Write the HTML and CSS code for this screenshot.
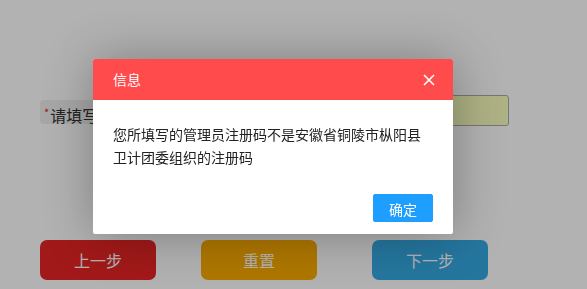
FILE: index.html
```html
<!DOCTYPE html>
<html lang="zh-CN">
<head>
<meta charset="utf-8">
<title>信息</title>
<link rel="stylesheet" href="styles.css">
</head>
<body>
<div class="page">
  <div class="form-row">
    <label class="field-label"><span class="req">*</span>请填写管理员注册码</label>
    <input class="field-input" type="text" value="">
  </div>
  <div class="actions">
    <button class="btn btn-prev">上一步</button>
    <button class="btn btn-reset">重置</button>
    <button class="btn btn-next">下一步</button>
  </div>
</div>
<div class="shade"></div>
<div class="layer">
  <div class="layer-title">信息
    <span class="layer-close"><svg width="12" height="12" viewBox="0 0 12 12"><path d="M1 1L11 11M11 1L1 11" stroke="#fff" stroke-width="1.6" fill="none"/></svg></span>
  </div>
  <div class="layer-content">您所填写的管理员注册码不是安徽省铜陵市枞阳县卫计团委组织的注册码</div>
  <div class="layer-btns"><a class="layer-btn">确定</a></div>
</div>
</body>
</html>
```
FILE: styles.css
```css
html, body {
  margin: 0;
  padding: 0;
  background: #fff;
  font-family: "Noto Sans CJK SC", "Noto Sans", sans-serif;
  overflow: hidden;
  width: 587px;
  height: 289px;
}
.page {
  padding: 95px 0 0 40px;
}
.form-row {
  display: flex;
  align-items: flex-start;
  height: 31px;
}
.field-label {
  display: block;
  flex: none;
  margin-top: 5px;
  height: 24px;
  line-height: 24px;
  width: 154px;
  box-sizing: border-box;
  padding-left: 4px;
  background: #f0f0f0;
  border-radius: 4px;
  font-size: 16px;
  color: #333;
  white-space: nowrap;
}
.req {
  color: #e02020;
  font-size: 11px;
  vertical-align: 5px;
  margin-right: 1px;
}
.field-input {
  flex: none;
  margin-left: 20px;
  width: 295px;
  height: 31px;
  box-sizing: border-box;
  background: #faffbd;
  border: 1px solid #aaa;
  border-radius: 3px;
}
.actions {
  display: flex;
  margin-top: 114px;
}
.btn {
  width: 116px;
  height: 40px;
  border: none;
  border-radius: 7px;
  color: #fff;
  font-family: "Noto Sans CJK SC", sans-serif;
  font-size: 16px;
  padding: 0;
}
.btn-prev { background: #e92525; }
.btn-reset { background: #fbab00; margin-left: 45px; }
.btn-next { background: #35a9e4; margin-left: 55px; }
.shade {
  position: fixed;
  inset: 0;
  background: rgba(0, 0, 0, 0.3);
}
.layer {
  position: absolute;
  left: 93px;
  top: 59px;
  width: 360px;
  background: #fff;
  border-radius: 2px;
  box-shadow: 1px 1px 50px rgba(0, 0, 0, 0.3);
}
.layer-title {
  position: relative;
  height: 41px;
  line-height: 41px;
  padding-left: 20px;
  background: #ff4b4b;
  color: #fff;
  font-size: 14px;
  border-radius: 2px 2px 0 0;
}
.layer-close {
  position: absolute;
  right: 18px;
  top: 15px;
  width: 12px;
  height: 12px;
  line-height: 0;
}
.layer-content {
  padding: 23px 20px 20px;
  line-height: 23px;
  font-size: 14px;
  color: #222;
}
.layer-btns {
  text-align: right;
  padding: 0 15px 12px;
}
.layer-btn {
  display: inline-block;
  margin: 5px 5px 0;
  height: 28px;
  line-height: 28px;
  padding: 0 15px;
  border: 1px solid #1e9fff;
  background: #1e9fff;
  color: #fff;
  font-size: 14px;
  border-radius: 2px;
  box-sizing: border-box;
  width: 60px;
  text-align: center;
}
```
